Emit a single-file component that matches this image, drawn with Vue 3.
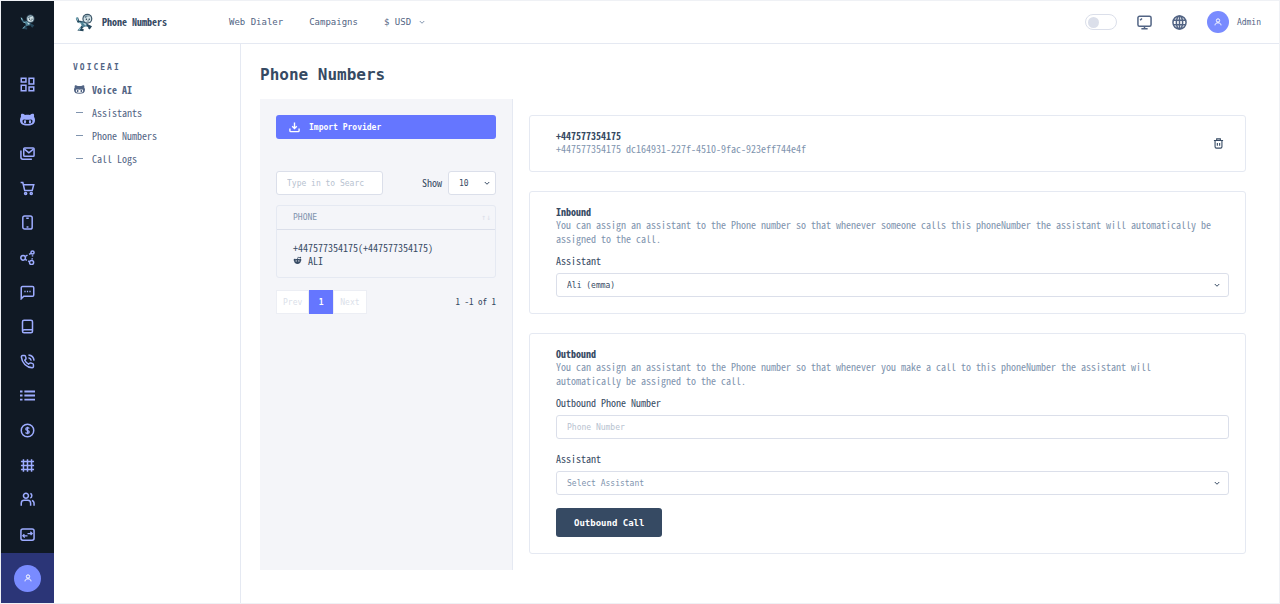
<script setup>
import { ref } from 'vue';

const darkMode = ref(false);
const search = ref('');
const pageSize = ref('10');
const inbound = ref('ali');
const outbound = ref('');
const outboundPhone = ref('');

const railItems = [
    { label: 'Dashboard', icon: 'grid' },
    { label: 'Voice AI', icon: 'cat' },
    { label: 'Email', icon: 'mails' },
    { label: 'Shop', icon: 'cart' },
    { label: 'Devices', icon: 'mobile' },
    { label: 'Share', icon: 'share' },
    { label: 'Messages', icon: 'chat' },
    { label: 'Contacts', icon: 'book' },
    { label: 'Calls', icon: 'call' },
    { label: 'Lists', icon: 'list' },
    { label: 'Billing', icon: 'coin' },
    { label: 'Numbers', icon: 'hash' },
    { label: 'Users', icon: 'users' },
    { label: 'Transfers', icon: 'swap' }
];

const icons = {
    grid: '<path d="M2 2h7.500v6H2zM14.500 2H22v9h-7.500zM2 13h7.500v9H2zM14.500 16H22v6h-7.500z"/>',
    cat: '<path fill="currentColor" stroke="none" fill-rule="evenodd" d="M2 3c2-.6 4.500.500 6 1.600 2.500-.5 5.500-.5 8 0C17.500 3.500 20 2.400 22 3c.8 1.800.6 3.600.4 4.600 1 1.400 1.600 3 1.600 5 0 6.400-4 8.900-12 8.900S0 19 0 12.600c0-2 .6-3.600 1.600-5C1.400 6.600 1.200 4.800 2 3zM6.500 12C4.500 12 4 13.500 4 15.200c0 3 3.500 3.800 8 3.800s8-.8 8-3.800c0-1.700-.5-3.200-2.500-3.200-2 0-3.500.5-5.500.5S8.500 12 6.500 12z"/><ellipse cx="8" cy="15.500" rx="1.800" ry="2.700" fill="currentColor" stroke="none"/><ellipse cx="16" cy="15.500" rx="1.800" ry="2.700" fill="currentColor" stroke="none"/>',
    mails: '<rect x="6" y="3" width="16.500" height="13.500" rx="1.500"/><path d="M7 5l7.200 6L21.500 5M1.500 7v11c0 2 1 3 3 3H19"/>',
    cart: '<path d="M1 2.500h3.500l3 12.500h12L22 6H5.500"/><circle cx="9" cy="20" r="1.700"/><circle cx="18" cy="20" r="1.700"/>',
    mobile: '<rect x="4.500" y="1.500" width="15" height="21" rx="3"/><path d="M10 5h4M10.500 19h3"/>',
    share: '<circle cx="5" cy="12.500" r="3.700"/><circle cx="20" cy="4" r="2.500"/><circle cx="18.500" cy="20" r="3.300"/><path d="M9 10l3-2M14.500 7l3-1.700M8.500 15l2.500 1.500M13 17.500l2 1M20 8.500v2M19.500 13v2"/>',
    chat: '<path d="M2 22V4.500C2 3 3 2.500 4 2.500h16c1.500 0 2 .5 2 2V16c0 1.500-.5 2-2 2H6z"/><path d="M7 10.500h2M11 10.500h2M15 10.500h2"/>',
    book: '<path d="M4 19V4.500C4 3 5 2 6.500 2h11C19 2 20 3 20 4.500v15c0 1.500-1 2.500-2.500 2.500h-11C5 22 4 21 4 19.500 4 18 5 17 6.500 17H20"/>',
    call: '<path d="M21.500 17v3c0 1.200-.9 2-2.100 1.900C10.500 21.500 3 14 2.200 5c-.1-1.400.7-2.500 2-2.500h3c1 0 1.600.7 1.800 1.700l.6 2.500c.2.900 0 1.500-.6 2L7.600 10c1.400 2.700 3.500 4.800 6.200 6.200l1.300-1.300c.6-.6 1.200-.8 2-.6l2.600.7c1 .2 1.800 1 1.800 2zM13.500 6c2.500.5 4 2 4.500 4.500M13.500 1.500c5 .5 8.500 4 9 9"/>',
    list: '<path stroke-width="3" d="M7 5.500h17M7 12h17M7 18.500h17M0 5.500h4M0 12h4M0 18.500h4"/>',
    coin: '<circle cx="12" cy="12" r="10"/><path stroke-width="2" d="M14.800 9c-.3-1-1.300-1.600-2.800-1.600S9.200 8.200 9.200 9.500c0 3 5.600 1.600 5.600 4.800 0 1.400-1.200 2.300-2.800 2.300s-2.700-.6-3-1.700M12 6v12"/>',
    hash: '<path d="M5.500 2v20M12 2v20M18.500 2v20M1.500 5.500h21M1.500 12h21M1.500 18.500h21"/>',
    users: '<circle cx="9.500" cy="6" r="4"/><path d="M2 22v-4c0-3.500 2-5 4.500-5h6c2.500 0 4.500 1.500 4.500 5v4M16.500 2.500c3 .5 3.500 6 0 7M19 13.500c2.500.5 3.500 2.500 3.500 5V22"/>',
    swap: '<rect x="1.500" y="3" width="21" height="18" rx="3"/><path stroke-width="2" d="M12 10.500h7M16.500 7.500l3 3-2.500 2.500M12 14H5M7.500 17l-3-3L7 11.500"/>',
    user: '<circle cx="12" cy="7.500" r="5"/><path d="M3 22c.5-5 3-7.500 9-7.500s8.500 2.500 9 7.500"/>',
    monitor: '<rect x="1.500" y="2" width="21" height="16" rx="2.500"/><path d="M7 22h10M12 18v4M5 8.500L8 5.500"/>',
    globe: '<circle cx="12" cy="12" r="10.500"/><ellipse cx="12" cy="12" rx="5" ry="10.500"/><path d="M2 8.500h20M2 15.500h20M12 1.500v21"/>',
    trash: '<path d="M2 5.500h20M8 5V2h8v3M4.500 6v13c0 2 1 3 3 3h9c2 0 3-1 3-3V6M9.500 11v6M14.500 11v6"/>',
    download: '<path stroke-width="3" d="M12 1v13M7 9.500l5 5 5-5M2 14v5c0 1.500.5 2 2 2h16c1.500 0 2-.5 2-2v-5"/>',
    chevron: '<path d="M3 8l9 9 9-9"/>',
    reddit: '<path fill="currentColor" stroke="none" fill-rule="evenodd" d="M3 8c1.500-.8 3-.5 4 .4C8.500 7.600 10 7.300 11.500 7.200L13 2l5 1.200A2 2 0 1 1 18 5l-4-.8-.9 3c1.500.1 3 .5 4.200 1.200 1-.9 2.500-1.200 3.700-.4 2 1.300 1.800 3.800 0 4.800.6 5-4 8.700-9 8.700s-9.600-3.700-9-8.700C1.200 11.800 1 9.200 3 8zM8.500 11.500a1.700 1.700 0 1 0 .1 3.400 1.700 1.700 0 0 0-.1-3.400zM15.500 11.500a1.700 1.700 0 1 0 .1 3.400 1.700 1.700 0 0 0-.1-3.400z"/>'
};

// flying robot mascot, shared by the rail and the top bar
const logo = `
    <path d="M4 10l3 8 10 2M18 26l-8 9 8 1M24 25l8 4-3 4" stroke="#27485c" stroke-width="5" fill="none"/>
    <path d="M3 9l3 7M8 20l7 2M12 31l-4 5" stroke="#8fc6d4" stroke-width="2.500" fill="none"/>
    <path d="M14 17l12 3-1 8-9 2-3-6z" fill="#4d8094"/>
    <path d="M17 21l7 1-2 5z" fill="#c4dde4"/>
    <circle cx="26" cy="12" r="10.500" fill="#3b5668"/>
    <circle cx="26" cy="12" r="8" fill="#d3e2e7"/>
    <path d="M19 8c4-4 10-4 13 0l-5-1-5 4z" fill="#6f8b99"/>
    <circle cx="24" cy="13" r="1.500" fill="#203747"/>
    <circle cx="30" cy="13" r="1.500" fill="#203747"/>
    <path d="M24 17l6-1-2 2z" fill="#203747"/>`;
</script>

<template>
    <div class="page">
        <aside class="rail">
            <a class="rail-logo" href="#" aria-label="Home">
                <svg class="logo" viewBox="0 0 40 40" aria-hidden="true" v-html="logo"></svg>
            </a>
            <nav class="rail-nav" aria-label="Modules">
                <a v-for="item in railItems" :key="item.icon" href="#" :aria-label="item.label">
                    <svg class="icon" viewBox="0 0 24 24" v-html="icons[item.icon]"></svg>
                </a>
            </nav>
            <button class="rail-user" aria-label="Account">
                <span class="avatar large"><svg class="icon tiny" viewBox="0 0 24 24" v-html="icons.user"></svg></span>
            </button>
        </aside>

        <div class="content">
            <header class="topbar">
                <a class="brand" href="#">
                    <svg class="logo" viewBox="0 0 40 40" aria-hidden="true" v-html="logo"></svg>
                    <span>Phone Numbers</span>
                </a>
                <nav class="top-links" aria-label="Main">
                    <a href="#">Web Dialer</a>
                    <a href="#">Campaigns</a>
                    <button class="currency">$ USD <svg class="icon mini" viewBox="0 0 24 24" v-html="icons.chevron"></svg></button>
                </nav>
                <div class="tools">
                    <input v-model="darkMode" class="switch" type="checkbox" aria-label="Dark mode">
                    <button aria-label="Display"><svg class="icon" viewBox="0 0 24 24" v-html="icons.monitor"></svg></button>
                    <button aria-label="Language"><svg class="icon" viewBox="0 0 24 24" v-html="icons.globe"></svg></button>
                    <button class="account">
                        <span class="avatar"><svg class="icon tiny" viewBox="0 0 24 24" v-html="icons.user"></svg></span>
                        Admin
                    </button>
                </div>
            </header>

            <div class="body">
                <nav class="subnav" aria-label="Voice AI">
                    <h2>VOICEAI</h2>
                    <a class="parent" href="#"><svg class="icon small" viewBox="0 0 24 24" v-html="icons.cat"></svg>Voice AI</a>
                    <a href="#"><i class="dash"></i>Assistants</a>
                    <a href="#"><i class="dash"></i>Phone Numbers</a>
                    <a href="#"><i class="dash"></i>Call Logs</a>
                </nav>

                <main class="main">
                    <h1>Phone Numbers</h1>
                    <div class="columns">
                        <section class="panel">
                            <button class="import"><svg class="icon small" viewBox="0 0 24 24" v-html="icons.download"></svg>Import Provider</button>
                            <div class="filters">
                                <input v-model="search" class="search" type="text" placeholder="Type in to Search" aria-label="Search">
                                <label for="page-size">Show</label>
                                <span class="select page-size">
                                    <select id="page-size" v-model="pageSize">
                                        <option>10</option>
                                        <option>25</option>
                                        <option>50</option>
                                    </select>
                                    <svg class="icon mini" viewBox="0 0 24 24" v-html="icons.chevron"></svg>
                                </span>
                            </div>
                            <table class="phones">
                                <thead>
                                    <tr>
                                        <th><span class="head">PHONE <span class="sort">↑↓</span></span></th>
                                    </tr>
                                </thead>
                                <tbody>
                                    <tr>
                                        <td>
                                            +447577354175(+447577354175)
                                            <span class="owner"><svg class="icon owner-icon" viewBox="0 0 24 24" v-html="icons.reddit"></svg>ALI</span>
                                        </td>
                                    </tr>
                                </tbody>
                            </table>
                            <div class="paging">
                                <div class="pages">
                                    <button disabled>Prev</button>
                                    <button class="current">1</button>
                                    <button disabled>Next</button>
                                </div>
                                <span>1 -1 of 1</span>
                            </div>
                        </section>

                        <div class="details">
                            <section class="card number">
                                <div>
                                    <h3>+447577354175</h3>
                                    <p>+447577354175 dc164931-227f-4510-9fac-923eff744e4f</p>
                                </div>
                                <button class="delete" aria-label="Delete"><svg class="icon small" viewBox="0 0 24 24" v-html="icons.trash"></svg></button>
                            </section>

                            <section class="card">
                                <h3>Inbound</h3>
                                <p>You can assign an assistant to the Phone number so that whenever someone calls this phoneNumber the assistant will automatically be assigned to the call.</p>
                                <label for="inbound">Assistant</label>
                                <span class="select">
                                    <select id="inbound" v-model="inbound">
                                        <option value="ali">Ali (emma)</option>
                                    </select>
                                    <svg class="icon mini" viewBox="0 0 24 24" v-html="icons.chevron"></svg>
                                </span>
                            </section>

                            <section class="card">
                                <h3>Outbound</h3>
                                <p>You can assign an assistant to the Phone number so that whenever you make a call to this phoneNumber the assistant will automatically be assigned to the call.</p>
                                <label for="outbound-phone">Outbound Phone Number</label>
                                <input id="outbound-phone" v-model="outboundPhone" class="field" type="text" placeholder="Phone Number">
                                <label class="spaced" for="outbound">Assistant</label>
                                <span class="select empty">
                                    <select id="outbound" v-model="outbound">
                                        <option value="">Select Assistant</option>
                                        <option value="ali">Ali (emma)</option>
                                    </select>
                                    <svg class="icon mini" viewBox="0 0 24 24" v-html="icons.chevron"></svg>
                                </span>
                                <button class="call">Outbound Call</button>
                            </section>
                        </div>
                    </div>
                </main>
            </div>
        </div>
    </div>
</template>

<style>
body {
    background: #fff;
}
</style>

<style scoped>
.page, .page * {
    box-sizing: border-box;
}

.page {
    display: flex;
    min-height: 100vh;
    border: 1px solid #eff1f5;
    font-family: "Noto Sans Mono CJK SC", "Liberation Mono", monospace;
    font-size: 10px;
    line-height: 14px;
    color: #364a63;
}

h1, h2, h3, p {
    margin: 0;
}

a {
    color: inherit;
    text-decoration: none;
}

button, input, select {
    font-family: "DejaVu Sans Mono", monospace;
    font-size: 8px;
    color: inherit;
}

button {
    padding: 0;
    border: 0;
    background: none;
    cursor: pointer;
}

.icon {
    display: block;
    flex: none;
    width: 15px;
    height: 15px;
    fill: none;
    stroke: currentColor;
    stroke-width: 2.4;
}

.icon.small {
    width: 11px;
    height: 11px;
}

.icon.tiny {
    width: 8px;
    height: 8px;
    stroke-width: 3;
}

.icon.mini {
    width: 6px;
    height: 6px;
    stroke-width: 4;
}

.logo {
    display: block;
    width: 19px;
    height: 19px;
}

/* left icon rail */
.rail {
    display: flex;
    flex-direction: column;
    flex: none;
    width: 53px;
    background: #101924;
    color: #9dacff;
}

.rail-logo {
    display: flex;
    align-items: center;
    justify-content: center;
    height: 42px;
}

.rail-logo .logo {
    width: 16px;
    height: 16px;
}

.rail-nav {
    display: flex;
    flex: 1;
    flex-direction: column;
    align-items: center;
    justify-content: space-between;
    padding: 34px 0 11px;
}

.rail-user {
    display: flex;
    align-items: center;
    justify-content: center;
    height: 50px;
    background: #2b3577;
}

.avatar {
    display: flex;
    align-items: center;
    justify-content: center;
    width: 22px;
    height: 22px;
    border-radius: 50%;
    background: #798bff;
    color: #fff;
}

.avatar.large {
    width: 27px;
    height: 27px;
}

.content {
    display: flex;
    flex: 1;
    flex-direction: column;
    min-width: 0;
}

/* top bar */
.topbar {
    display: flex;
    align-items: center;
    height: 43px;
    padding: 0 18px 0 21px;
    border-bottom: 1px solid #e5e9f2;
}

.brand {
    display: flex;
    align-items: center;
    gap: 8px;
    font-weight: 700;
}

.top-links {
    display: flex;
    align-items: center;
    gap: 26px;
    margin-left: 62px;
    font-family: "DejaVu Sans Mono", monospace;
    font-size: 9px;
    color: #526484;
}

.currency {
    display: flex;
    align-items: center;
    gap: 8px;
    font-size: 9px;
}

.currency .icon {
    color: #8094ae;
}

.tools {
    display: flex;
    align-items: center;
    gap: 20px;
    margin-left: auto;
    color: #526484;
}

.switch {
    display: flex;
    align-items: center;
    appearance: none;
    width: 32px;
    height: 16px;
    margin: 0;
    padding: 2px;
    border: 1px solid #dbdfea;
    border-radius: 8px;
    background: #fff;
}

.switch::before {
    content: "";
    width: 11px;
    height: 11px;
    border-radius: 50%;
    background: #dbdfea;
}

.switch:checked {
    justify-content: flex-end;
}

.account {
    display: flex;
    align-items: center;
    gap: 8px;
}

/* section menu */
.body {
    display: flex;
    flex: 1;
}

.subnav {
    flex: none;
    width: 187px;
    padding: 17px 19px;
    border-right: 1px solid #e5e9f2;
    color: #526484;
}

.subnav h2 {
    margin-bottom: 3px;
    font-family: "DejaVu Sans Mono", monospace;
    font-size: 8px;
    font-weight: 700;
    letter-spacing: 2px;
    line-height: 14px;
}

.subnav a {
    display: flex;
    align-items: center;
    gap: 7px;
    height: 23px;
    padding-left: 1px;
}

.subnav .parent {
    font-weight: 700;
}

.dash {
    width: 7px;
    height: 1px;
    margin: 0 2px;
    background: #8094ae;
}

.main {
    flex: 1;
    min-width: 0;
    padding: 18px 33px 32px 19px;
}

h1 {
    margin-bottom: 11px;
    font-family: "DejaVu Sans Mono", monospace;
    font-size: 16px;
    font-weight: 700;
    line-height: 26px;
}

.columns {
    display: flex;
    gap: 16px;
}

/* phone list */
.panel {
    flex: none;
    width: 253px;
    padding: 16px;
    border-right: 1px solid #e5e9f2;
    background: #f4f5f9;
}

.import {
    display: flex;
    align-items: center;
    gap: 9px;
    width: 100%;
    height: 24px;
    padding: 0 13px;
    border-radius: 3px;
    background: #6576ff;
    color: #fff;
    font-weight: 700;
}

.filters {
    display: flex;
    align-items: center;
    gap: 6px;
    margin: 32px 0 10px;
}

.search {
    width: 107px;
    height: 24px;
    margin-right: auto;
    padding: 0 18px 0 10px;
    border: 1px solid #dbdfea;
    border-radius: 3px;
    background: #fff;
}

input::placeholder {
    color: #b7c2d0;
    opacity: 1;
}

.select {
    display: grid;
    align-items: center;
}

.select select, .select .icon {
    grid-area: 1 / 1;
}

.select select {
    appearance: none;
    width: 100%;
    height: 24px;
    padding: 0 10px;
    border: 1px solid #dbdfea;
    border-radius: 3px;
    background: #fff;
}

.select .icon {
    justify-self: end;
    margin-right: 9px;
    pointer-events: none;
}

.page-size {
    width: 48px;
}

.page-size .icon {
    margin-right: 6px;
}

.phones {
    width: 100%;
    border: 1px solid #e5e9f2;
    border-collapse: separate;
    border-spacing: 0;
    border-radius: 3px;
}

.phones th {
    height: 24px;
    padding: 0 4px 0 16px;
    border-bottom: 1px solid #dbdfea;
    color: #8094ae;
    font-family: "DejaVu Sans Mono", monospace;
    font-size: 8px;
    font-weight: 400;
}

.head {
    display: flex;
    justify-content: space-between;
}

.sort {
    color: #dbdfea;
}

.phones td {
    height: 47px;
    padding: 0 16px;
    line-height: 13px;
}

.owner {
    display: flex;
    align-items: center;
    gap: 6px;
}

.owner-icon {
    width: 9px;
    height: 9px;
}

.paging {
    display: flex;
    align-items: center;
    justify-content: space-between;
    margin-top: 12px;
    font-size: 9px;
}

.pages {
    display: flex;
}

.pages button {
    height: 24px;
    padding: 0 6px;
    border: 1px solid #eceef4;
    background: #fff;
}

.pages button:disabled {
    color: #dbdfea;
}

.pages .current {
    width: 24px;
    border-color: #6576ff;
    background: #6576ff;
    color: #fff;
    font-weight: 700;
}

/* number details */
.details {
    display: flex;
    flex: 1;
    flex-direction: column;
    gap: 19px;
    min-width: 0;
    padding: 16px 0;
}

.card {
    padding: 14px 16px 16px 26px;
    border: 1px solid #e5e9f2;
    border-radius: 3px;
}

.card h3 {
    font-size: 10px;
    font-weight: 700;
    line-height: 12px;
}

.card p {
    padding-right: 16px;
    color: #8094ae;
}

.number {
    display: flex;
    align-items: center;
    justify-content: space-between;
    padding-bottom: 15px;
}

.delete {
    padding: 5px;
}

.card label {
    display: block;
    margin: 8px 0 5px;
}

.card label.spaced {
    margin-top: 13px;
}

.field {
    display: block;
    width: 100%;
    height: 24px;
    padding: 0 10px;
    border: 1px solid #dbdfea;
    border-radius: 3px;
}

.empty select {
    color: #8094ae;
}

.call {
    height: 29px;
    margin-top: 13px;
    padding: 0 18px;
    border-radius: 3px;
    background: #364a63;
    color: #fff;
    font-size: 9px;
    font-weight: 700;
}
</style>
